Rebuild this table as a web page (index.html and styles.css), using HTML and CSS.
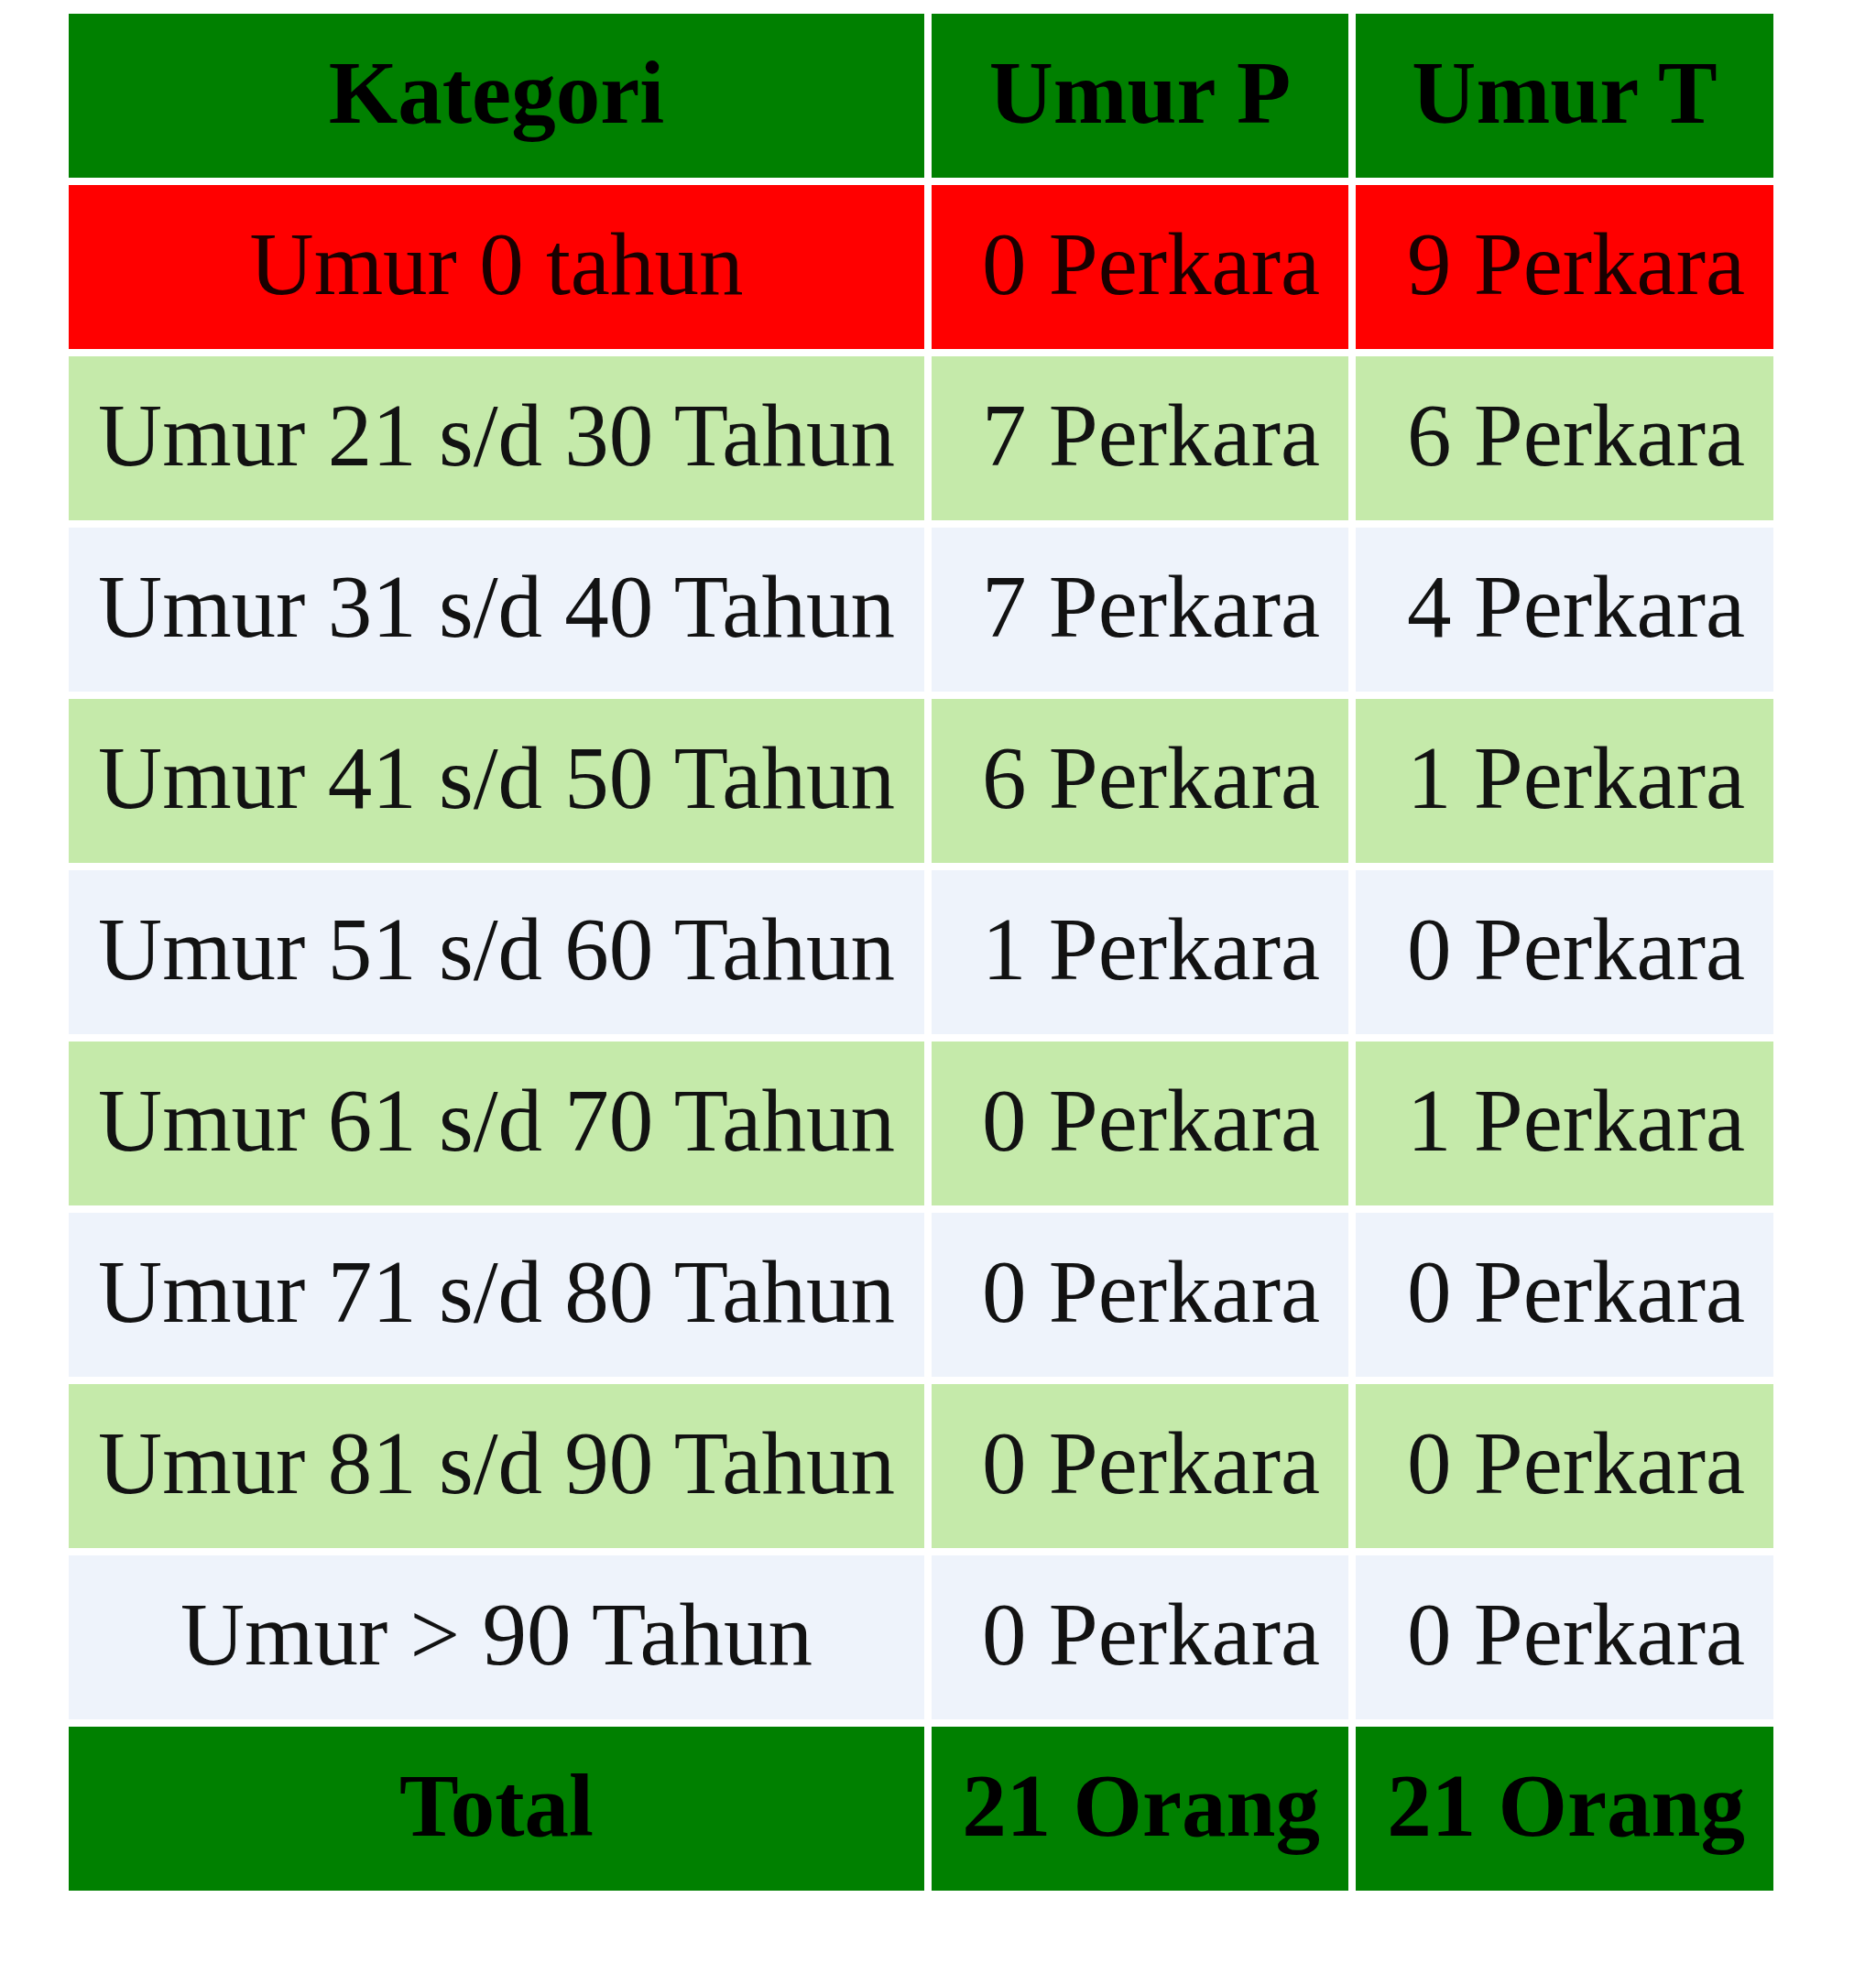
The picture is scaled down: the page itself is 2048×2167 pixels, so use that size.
FILE: index.html
```html
<!DOCTYPE html>
<html>
<head>
<meta charset="utf-8">
<link rel="stylesheet" href="styles.css">
</head>
<body>
<table class="stat">
  <colgroup>
    <col class="c-kat">
    <col class="c-num">
    <col class="c-num2">
  </colgroup>
  <thead>
    <tr class="head">
      <th>Kategori</th>
      <th>Umur P</th>
      <th>Umur T</th>
    </tr>
  </thead>
  <tbody>
    <tr class="r-red"><td class="kat">Umur 0 tahun</td><td class="num">0 Perkara</td><td class="num">9 Perkara</td></tr>
    <tr class="r-green"><td class="kat">Umur 21 s/d 30 Tahun</td><td class="num">7 Perkara</td><td class="num">6 Perkara</td></tr>
    <tr class="r-light"><td class="kat">Umur 31 s/d 40 Tahun</td><td class="num">7 Perkara</td><td class="num">4 Perkara</td></tr>
    <tr class="r-green"><td class="kat">Umur 41 s/d 50 Tahun</td><td class="num">6 Perkara</td><td class="num">1 Perkara</td></tr>
    <tr class="r-light"><td class="kat">Umur 51 s/d 60 Tahun</td><td class="num">1 Perkara</td><td class="num">0 Perkara</td></tr>
    <tr class="r-green"><td class="kat">Umur 61 s/d 70 Tahun</td><td class="num">0 Perkara</td><td class="num">1 Perkara</td></tr>
    <tr class="r-light"><td class="kat">Umur 71 s/d 80 Tahun</td><td class="num">0 Perkara</td><td class="num">0 Perkara</td></tr>
    <tr class="r-green"><td class="kat">Umur 81 s/d 90 Tahun</td><td class="num">0 Perkara</td><td class="num">0 Perkara</td></tr>
    <tr class="r-light"><td class="kat">Umur &gt; 90 Tahun</td><td class="num">0 Perkara</td><td class="num">0 Perkara</td></tr>
  </tbody>
  <tfoot>
    <tr class="foot"><th>Total</th><th class="num">21 Orang</th><th class="num">21 Orang</th></tr>
  </tfoot>
</table>
</body>
</html>
```
FILE: styles.css
```css
html, body {
  margin: 0;
  padding: 0;
  background: #ffffff;
}

.stat {
  margin: 7px 0 0 67px;
  border-collapse: separate;
  border-spacing: 8px;
  table-layout: fixed;
  width: 1877px;
  font-family: "Liberation Serif", "Times New Roman", serif;
  font-size: 97px;
  color: #121212;
}

.c-kat { width: 934px; }
.c-num { width: 455px; }
.c-num2 { width: 456px; }

.stat th,
.stat td {
  height: 179px;
  padding: 0 31px 6px;
  box-sizing: border-box;
  white-space: nowrap;
  vertical-align: middle;
  line-height: 110px;
}

.stat th {
  font-weight: bold;
  text-align: center;
  color: #000;
}

.head th,
.foot th {
  background: #008000;
}

.foot th.num {
  padding: 0 31px 6px 20px;
  text-align: right;
}

.kat { text-align: center; }
.num { text-align: right; }

.r-red td { background: #ff0000; color: #1a0000; }
.r-green td { background: #c5eaaa; }
.r-light td { background: #eef3fb; }
```
